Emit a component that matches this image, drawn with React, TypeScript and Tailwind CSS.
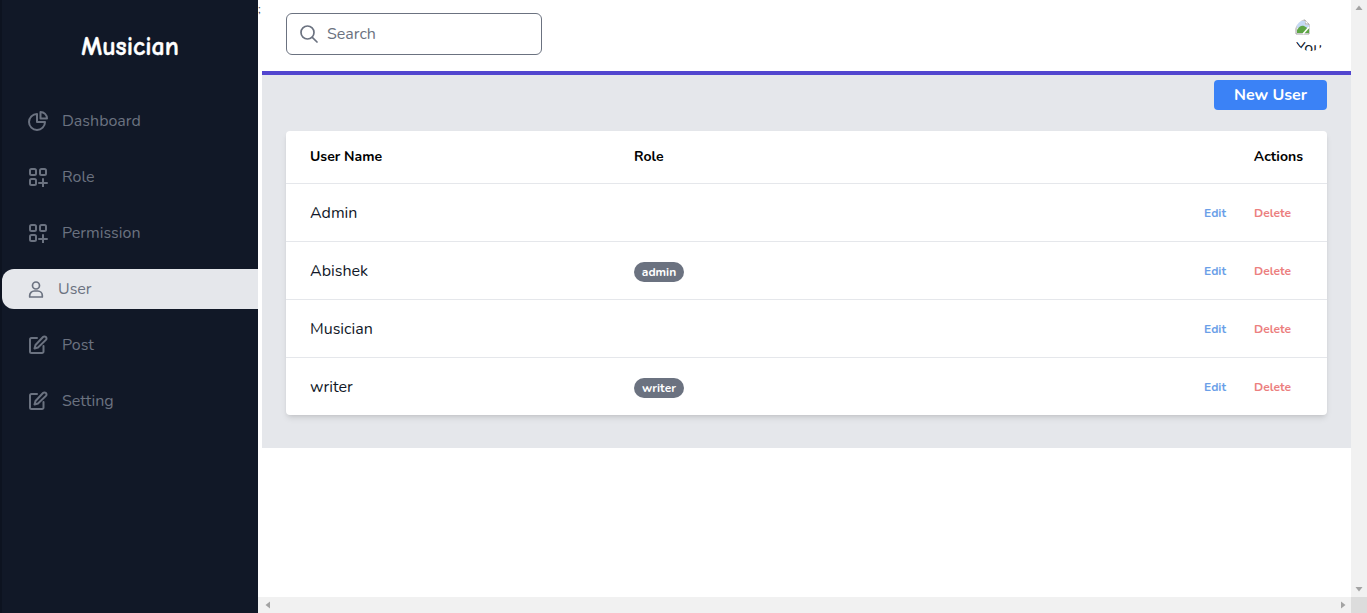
import React from 'react';

const FONT = { fontFamily: 'Nunito, "Noto Sans", sans-serif' };

function PieIcon() {
  return (
    <svg viewBox="0 0 20 20" className="w-5 h-5" fill="none" stroke="currentColor" strokeWidth="2" strokeLinecap="round" strokeLinejoin="round">
      <path d="M9 3A8 8 0 1 0 17 11H9Z" />
      <path d="M12.5 1V7.5H19A6.5 6.5 0 0 0 12.5 1Z" />
    </svg>
  );
}

function AppsIcon() {
  return (
    <svg viewBox="0 0 20 20" className="w-5 h-5" fill="none" stroke="currentColor" strokeWidth="2" strokeLinecap="round" strokeLinejoin="round">
      <rect x="2" y="2" width="6" height="6" rx="1.5" />
      <rect x="12" y="2" width="6" height="6" rx="1.5" />
      <rect x="2" y="12" width="6" height="6" rx="1.5" />
      <path d="M11 16h8M15 12v8" />
    </svg>
  );
}

function UserIcon() {
  return (
    <svg viewBox="0 0 20 20" className="w-5 h-5" fill="none" stroke="currentColor" strokeWidth="1.7" strokeLinecap="round" strokeLinejoin="round">
      <circle cx="10" cy="6.5" r="3.5" />
      <path d="M3.7 18v-1.5a4.5 4.5 0 0 1 4.5-4.5h3.6a4.5 4.5 0 0 1 4.5 4.5V18Z" />
    </svg>
  );
}

function EditIcon() {
  return (
    <svg viewBox="0 0 20 20" className="w-5 h-5" fill="none" stroke="currentColor" strokeWidth="2" strokeLinecap="round" strokeLinejoin="round">
      <path d="M9 3H3.5A1.5 1.5 0 0 0 2 4.5V16.5A1.5 1.5 0 0 0 3.5 18H14A1.5 1.5 0 0 0 15.5 16.5V11" />
      <path d="M15 2a1.9 1.9 0 0 1 2.9 2.9L10 12.5l-3.5 1 1-3.5Z" />
    </svg>
  );
}

const NAV = [
  { label: 'Dashboard', icon: <PieIcon /> },
  { label: 'Role', icon: <AppsIcon /> },
  { label: 'Permission', icon: <AppsIcon /> },
  { label: 'User', icon: <UserIcon />, active: true },
  { label: 'Post', icon: <EditIcon /> },
  { label: 'Setting', icon: <EditIcon /> },
];

const USERS = [
  { name: 'Admin', role: '' },
  { name: 'Abishek', role: 'admin' },
  { name: 'Musician', role: '' },
  { name: 'writer', role: 'writer' },
];

function Sidebar() {
  return (
    <aside className="w-[258px] h-full shrink-0 bg-[#111827] border-l-2 border-[#0d1320] flex flex-col">
      <div className="h-[92px] mt-[1px] mb-[8px] flex items-center justify-center text-white text-[26px] font-bold [-webkit-text-stroke:0.4px_white]" style={{ fontFamily: '"Comic Neue", "Comic Sans MS", cursive' }}>
        Musician
      </div>
      <nav className="flex flex-col gap-4">
        {NAV.map((item) =>
          item.active ? (
            <div key={item.label} className="h-10 flex items-center gap-3 pl-6 bg-[#e5e7eb] rounded-l-xl text-[#6b7280]">
              {item.icon}
              <span className="text-base">{item.label}</span>
            </div>
          ) : (
            <div key={item.label} className="h-10 flex items-center gap-[14px] pl-[26px] text-[#6b7280]">
              {item.icon}
              <span className="text-base">{item.label}</span>
            </div>
          )
        )}
      </nav>
    </aside>
  );
}

function Avatar() {
  return (
    <div className="w-[33px] h-[33px] mb-[3px] rounded-full overflow-hidden bg-white relative">
      <svg viewBox="0 0 16 16" className="w-4 h-4 absolute left-[1px] top-[1px]">
        <path d="M1 1h9l4 4v10H1z" fill="#f3f4f6" stroke="#a3a3a3" />
        <path d="M10 1v4h4" fill="#fff" stroke="#a3a3a3" />
        <path d="M2 2h8v4h4v3H2z" fill="#c5d9f3" />
        <path d="M2 11c2-4 5-5 7-4l5 3v4H2z" fill="#5da544" />
        <path d="M8 15 14 8" stroke="#fff" strokeWidth="1.5" />
      </svg>
      <span className="absolute left-[2px] top-[20px] text-base leading-5 text-[#111827] whitespace-nowrap">Your</span>
    </div>
  );
}

function Header() {
  return (
    <header className="h-[75px] shrink-0 bg-white border-b-4 border-[#5246cf] flex items-center justify-between pl-6 pr-6">
      <div className="w-[256px] h-[42px] mb-[3px] border border-[#6b7280] rounded-md flex items-center gap-[9px] pl-[13px]">
        <svg viewBox="0 0 18 18" className="w-[18px] h-[18px] text-[#6b7280]" fill="none" stroke="currentColor" strokeWidth="1.7" strokeLinecap="round">
          <circle cx="7.5" cy="7.5" r="6.5" />
          <path d="m12.3 12.3 4.7 4.7" />
        </svg>
        <span className="text-base text-[#6b7280]">Search</span>
      </div>
      <Avatar />
    </header>
  );
}

function UserTable() {
  return (
    <div className="bg-white rounded shadow-md">
      <div className="h-[53px] flex items-center px-6 text-sm font-bold text-black border-b border-[#e5e7eb]">
        <span className="w-[324px]">User Name</span>
        <span className="flex-1">Role</span>
        <span>Actions</span>
      </div>
      {USERS.map((u, i) => (
        <div key={u.name} className={`flex items-center pl-6 pr-9 ${i < USERS.length - 1 ? 'h-[58px] border-b border-[#e5e7eb]' : 'h-[57px]'}`}>
          <span className="w-[324px] text-base text-[#111827]">{u.name}</span>
          <span className="flex-1">
            {u.role && (
              <span className="inline-flex items-center justify-center w-[50px] h-5 rounded-full bg-[#6b7280] text-white text-xs font-bold">{u.role}</span>
            )}
          </span>
          <span className="text-xs font-bold text-[#6b9fe8] w-[50px]">Edit</span>
          <span className="text-xs font-bold text-[#ec7f7f]">Delete</span>
        </div>
      ))}
    </div>
  );
}

function Arrow({ d }: { d: string }) {
  return (
    <svg viewBox="0 0 8 8" className="w-2 h-2 text-[#a3a3a3]" fill="currentColor">
      <path d={d} />
    </svg>
  );
}

export default function App() {
  return (
    <div className="w-full h-[613px] flex overflow-hidden bg-white relative" style={FONT}>
      <Sidebar />
      <span className="absolute left-[258px] top-[1px] text-xs text-[#374151]">;</span>
      <div className="flex-1 min-w-0 flex flex-col">
        <div className="flex-1 min-h-0 flex">
          <main className="flex-1 min-w-0 pl-1">
            <Header />
            <div className="bg-[#e5e7eb] h-[373px] px-6 pt-[5px]">
              <div className="flex justify-end">
                <button className="w-[113px] h-[30px] rounded bg-[#3b82f6] text-white text-base font-bold">New User</button>
              </div>
              <div className="mt-[21px]">
                <UserTable />
              </div>
            </div>
          </main>
          <div className="w-4 shrink-0 bg-[#f1f1f1] flex flex-col items-center justify-between py-1">
            <Arrow d="M4 1.5 7.5 6h-7z" />
            <Arrow d="M4 6.5.5 2h7z" />
          </div>
        </div>
        <div className="h-4 shrink-0 flex">
          <div className="flex-1 bg-[#f1f1f1] flex items-center justify-between pl-[6px] pr-1">
            <Arrow d="M1.5 4 6 .5v7z" />
            <Arrow d="M6.5 4 2 .5v7z" />
          </div>
          <div className="w-4 bg-[#dcdcdc]" />
        </div>
      </div>
    </div>
  );
}
